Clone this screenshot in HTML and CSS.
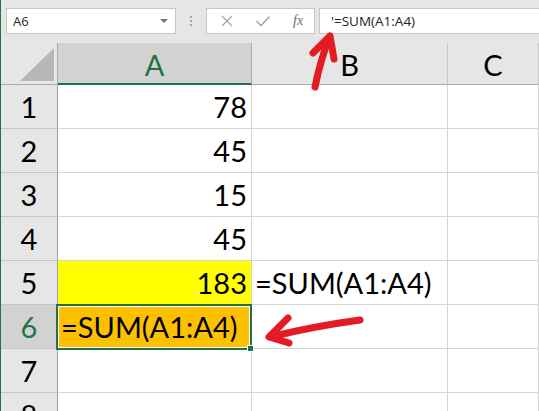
FILE: index.html
```html
<!DOCTYPE html>
<html>
<head>
<meta charset="utf-8">
<link rel="stylesheet" href="styles.css">
</head>
<body>
<div class="app">
  <div class="toolbar">
    <div class="namebox">
      <span class="ref">A6</span>
      <span class="caret"></span>
    </div>
    <div class="grip"><i></i><i></i><i></i></div>
    <div class="fxbtns">
      <svg class="ico" width="14" height="12" viewBox="0 0 14 12"><path d="M2 1 L12 11 M12 1 L2 11" stroke="#a9a9a9" stroke-width="1.4" fill="none"/></svg>
      <svg class="ico" width="16" height="12" viewBox="0 0 16 12"><path d="M1.5 6 L6 10.5 L14.5 1.5" stroke="#a9a9a9" stroke-width="1.6" fill="none"/></svg>
      <span class="fx">fx</span>
    </div>
    <div class="formula">'=SUM(A1:A4)</div>
  </div>
  <div class="sheet">
    <div class="corner"><svg width="57" height="41" viewBox="0 0 57 41"><polygon points="19,38 53,38 53,5" fill="#b7b7b7"/></svg></div>
    <div class="colhead active">A</div>
    <div class="colhead">B</div>
    <div class="colhead">C</div>

    <div class="rowhead">1</div><div class="cell num">78</div><div class="cell"></div><div class="cell"></div>
    <div class="rowhead">2</div><div class="cell num">45</div><div class="cell"></div><div class="cell"></div>
    <div class="rowhead">3</div><div class="cell num">15</div><div class="cell"></div><div class="cell"></div>
    <div class="rowhead">4</div><div class="cell num">45</div><div class="cell"></div><div class="cell"></div>
    <div class="rowhead">5</div><div class="cell num yellow">183</div><div class="cell txt">=SUM(A1:A4)</div><div class="cell"></div>
    <div class="rowhead active">6</div><div class="cell txt orange selected">=SUM(A1:A4)</div><div class="cell"></div><div class="cell"></div>
    <div class="rowhead">7</div><div class="cell"></div><div class="cell"></div><div class="cell"></div>
    <div class="rowhead">8</div><div class="cell"></div><div class="cell"></div><div class="cell"></div>
  </div>
  <svg class="marks" width="539" height="411" viewBox="0 0 539 411">
    <g stroke="#e31b23" stroke-width="7" stroke-linecap="round" stroke-linejoin="round" fill="none">
      <path d="M315 87 Q320 62 329 38"/>
      <path d="M313 53 L330 36 L334 59"/>
      <path d="M360 320 Q315 326 270 337"/>
      <path d="M288 318 L269 337 L289 343"/>
    </g>
  </svg>
</div>
</body>
</html>
```
FILE: styles.css
```css
html, body {
  margin: 0;
  padding: 0;
  background: #ffffff;
}
.app {
  position: relative;
  width: 539px;
  height: 411px;
  overflow: hidden;
  box-sizing: border-box;
  border-left: 1px solid #217346;
  display: flex;
  flex-direction: column;
  font-family: Lato, "Liberation Sans", sans-serif;
}
.toolbar {
  height: 43px;
  flex: none;
  box-sizing: border-box;
  background: #e6e6e6;
  padding: 8px 0 0 5px;
  display: flex;
  align-items: flex-start;
}
.namebox {
  width: 170px;
  height: 26px;
  box-sizing: border-box;
  background: #fff;
  border: 1px solid #c6c6c6;
  display: flex;
  align-items: center;
  justify-content: space-between;
  padding: 0 7px 0 6px;
  font-family: "Open Sans", sans-serif;
  font-size: 13px;
  color: #262626;
}
.caret {
  width: 0;
  height: 0;
  border-left: 4px solid transparent;
  border-right: 4px solid transparent;
  border-top: 4px solid #767676;
}
.grip {
  width: 30px;
  height: 26px;
  display: flex;
  flex-direction: column;
  align-items: center;
  justify-content: center;
  gap: 2px;
}
.grip i {
  display: block;
  width: 2px;
  height: 2px;
  background: #a6a6a6;
}
.fxbtns {
  width: 109px;
  height: 26px;
  box-sizing: border-box;
  background: #fff;
  border: 1px solid #c6c6c6;
  display: flex;
  align-items: center;
  padding-left: 13px;
  gap: 21px;
}
.fx {
  font-family: "Liberation Serif", serif;
  font-style: italic;
  font-size: 14px;
  color: #6e6e6e;
  margin-left: 1px;
}
.formula {
  margin-left: 4px;
  flex: 1;
  height: 26px;
  box-sizing: border-box;
  background: #fff;
  border: 1px solid #c6c6c6;
  border-right: none;
  padding-left: 11px;
  display: flex;
  align-items: center;
  font-family: "Open Sans", sans-serif;
  font-size: 13.5px;
  color: #222;
}
.sheet {
  display: grid;
  grid-template-columns: 57px 194px 196px 1fr;
  grid-template-rows: 42px repeat(8, 44px);
  font-size: 29px;
  color: #000;
}
.corner {
  background: #e6e6e6;
  border-right: 1px solid #ababab;
  border-bottom: 1px solid #ababab;
  box-sizing: border-box;
}
.corner svg { display: block; }
.colhead {
  background: #e6e6e6;
  box-sizing: border-box;
  border-right: 1px solid #c8c8c8;
  border-bottom: 1px solid #ababab;
  display: flex;
  align-items: center;
  justify-content: center;
  padding-top: 2px;
}
.colhead.active {
  background: #d2d2d2;
  color: #217346;
  border-right-color: #ababab;
  border-bottom: 2px solid #217346;
}
.rowhead {
  background: #e6e6e6;
  box-sizing: border-box;
  border-right: 1px solid #9f9f9f;
  border-bottom: 1px solid #c6c6c6;
  display: flex;
  align-items: center;
  justify-content: center;
}
.rowhead.active {
  background: #d2d2d2;
  color: #217346;
}
.cell {
  box-sizing: border-box;
  border-right: 1px solid #d4d4d4;
  border-bottom: 1px solid #d4d4d4;
  display: flex;
  align-items: center;
  white-space: nowrap;
}
.cell.num {
  justify-content: flex-end;
  padding-right: 4px;
}
.cell.txt {
  padding-left: 3px;
}
.yellow { background: #ffff00; }
.orange { background: #ffc000; }
.selected {
  position: relative;
  padding-left: 4px;
}
.selected::after {
  content: "";
  position: absolute;
  left: -2px;
  top: -1px;
  right: -1px;
  bottom: -2px;
  border: 2px solid #217346;
  box-shadow: inset 0 0 0 1px #ffffff;
}
.selected::before {
  content: "";
  position: absolute;
  right: -3px;
  bottom: -4px;
  width: 5px;
  height: 5px;
  background: #217346;
  border: 1px solid #ffffff;
  z-index: 2;
}
.marks {
  position: absolute;
  left: -1px;
  top: 0;
  pointer-events: none;
}
```
